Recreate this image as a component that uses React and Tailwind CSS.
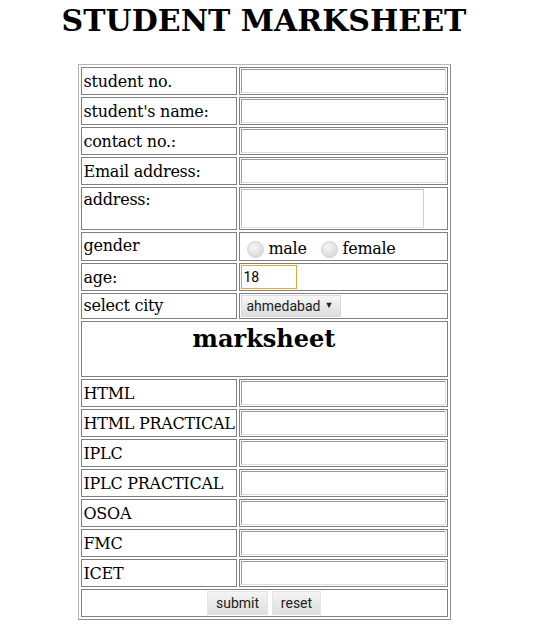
import React from 'react';

const serif = { fontFamily: '"DejaVu Serif", "Liberation Serif", serif' };
const sans = { fontFamily: 'Roboto, "Liberation Sans", sans-serif' };

const cell = 'border border-[#808080] p-[1px] align-middle';
const textInput =
  'block w-full h-[24px] border border-t-[#9a9a9a] border-l-[#9a9a9a] border-b-[#dedede] border-r-[#dedede] bg-white outline-none';
const labelText = 'text-[16px] leading-[22px] tracking-[-0.25px] pl-[1px] whitespace-nowrap';

function Row({ label, children, top }) {
  return (
    <tr>
      <td className={`${cell} ${top ? 'align-top' : ''}`}>
        <div className={`${labelText} ${top ? '' : 'pt-[2px]'}`}>{label}</div>
      </td>
      <td className={cell}>{children || <input type="text" className={textInput} />}</td>
    </tr>
  );
}

function Radio({ label }) {
  return (
    <label className="inline-flex items-end">
      <span className="inline-block w-[17px] h-[17px] rounded-full bg-[radial-gradient(circle_at_40%_35%,#f6f6f6,#d0d0d0)] border border-[#d4d4d4] mb-[1px] mr-[5px]" />
      <span className="text-[16px] leading-[20px] tracking-[-0.3px]">{label}</span>
    </label>
  );
}

export default function App() {
  const subjects = ['HTML', 'HTML PRACTICAL', 'IPLC', 'IPLC PRACTICAL', 'OSOA', 'FMC', 'ICET'];

  return (
    <div className="w-[528px] bg-white text-black" style={serif}>
      <h1 className="text-center font-bold text-[30px] leading-[40px] pt-[1px]">STUDENT MARKSHEET</h1>

      <table className="table-fixed w-[373px] mx-auto mt-[23px] border-separate border-spacing-[2px] border border-t-[#b5b5b5] border-l-[#b5b5b5] border-b-[#8c8c8c] border-r-[#8c8c8c]">
        <colgroup>
          <col className="w-[156px]" />
          <col />
        </colgroup>
        <tbody>
          <Row label="student no." />
          <Row label="student's name:" />
          <Row label="contact no.:" />
          <Row label="Email address:" />
          <Row label="address:" top>
            <textarea className="block w-[183px] h-[39px] resize-none border border-t-[#bdbdbd] border-l-[#bdbdbd] border-b-[#e2e2e2] border-r-[#d0d0d0] outline-none" />
          </Row>
          <tr>
            <td className={cell}>
              <div className={`${labelText} h-[25px] pt-[1px]`}>gender</div>
            </td>
            <td className={cell}>
              <div className="h-[25px] flex items-end pl-[6px]">
                <Radio label="male" />
                <span className="w-[14px]" />
                <Radio label="female" />
              </div>
            </td>
          </tr>
          <tr>
            <td className={cell}>
              <div className={`${labelText} pt-[2px]`}>age:</div>
            </td>
            <td className={cell}>
              <input
                type="text"
                defaultValue="18"
                className="block w-[56px] h-[24px] border border-[#e6a53b] px-[2px] text-[14px] outline-none"
                style={sans}
              />
            </td>
          </tr>
          <tr>
            <td className={cell}>
              <div className={labelText}>select city</div>
            </td>
            <td className={cell}>
              <div
                className="w-[100px] h-[22px] flex items-center justify-between pl-[5px] pr-[6px] border border-[#dadada] bg-gradient-to-b from-[#f6f6f6] to-[#dddddd] text-[14px] text-[#222]"
                style={sans}
              >
                <span>ahmedabad</span>
                <span className="text-[9px]">▼</span>
              </div>
            </td>
          </tr>
          <tr>
            <td colSpan={2} className={`${cell} align-top h-[56px]`}>
              <h2 className="text-center font-bold text-[24px] leading-[30px] pt-[1px]">marksheet</h2>
            </td>
          </tr>
          {subjects.map((s) => (
            <Row key={s} label={s} />
          ))}
          <tr>
            <td colSpan={2} className={`${cell} text-center`}>
              <div className="flex justify-center gap-[4px]" style={sans}>
                <button className="h-[24px] w-[61px] bg-gradient-to-b from-[#f4f4f4] to-[#dedede] text-[14px] text-[#222] border border-[#e4e4e4]">
                  submit
                </button>
                <button className="h-[24px] w-[49px] bg-gradient-to-b from-[#f4f4f4] to-[#dedede] text-[14px] text-[#222] border border-[#e4e4e4]">
                  reset
                </button>
              </div>
            </td>
          </tr>
        </tbody>
      </table>
    </div>
  );
}
